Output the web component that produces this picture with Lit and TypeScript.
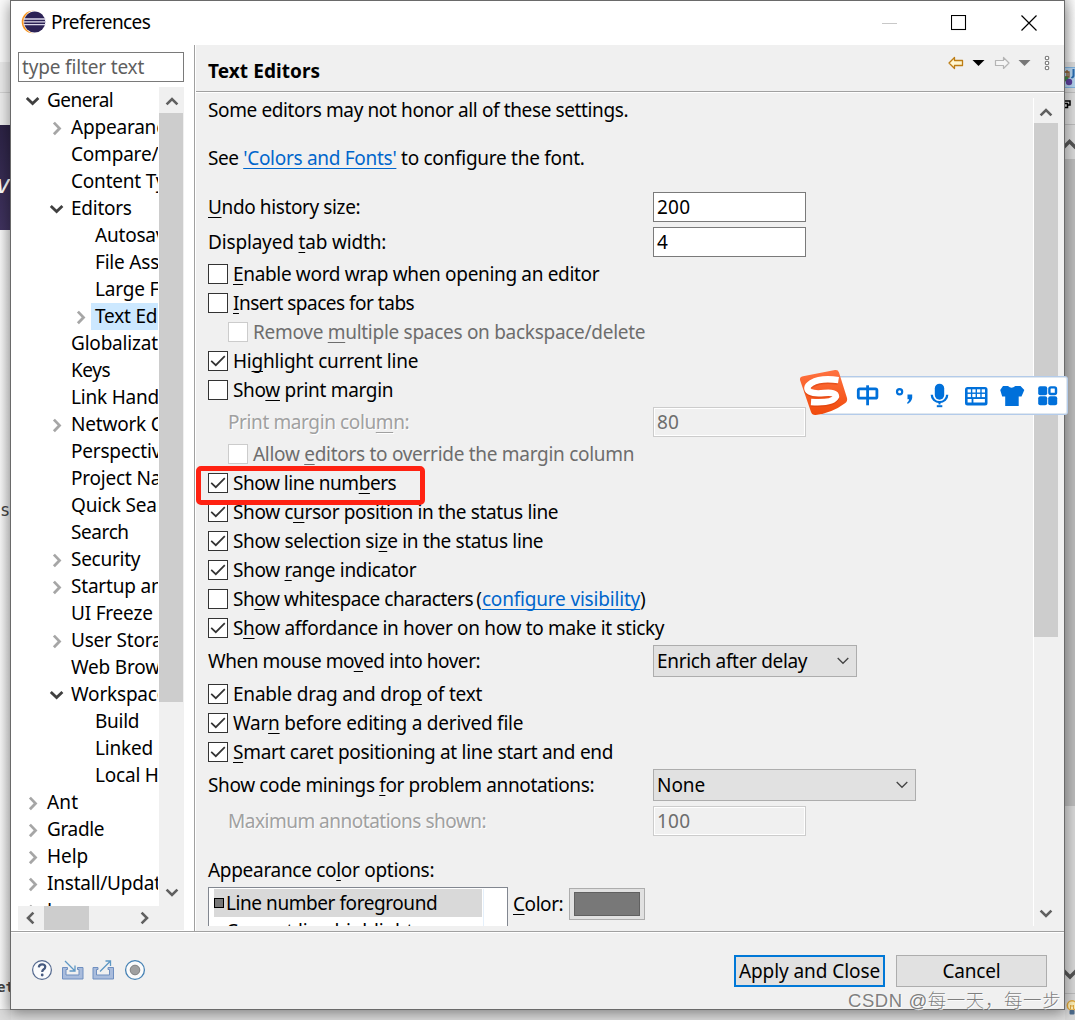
import { LitElement, html, svg, css, nothing } from "lit";
import { customElement, property } from "lit/decorators.js";
import { classMap } from "lit/directives/class-map.js";

/** Text with an "&" mnemonic marker; spreads its letters so that it fills `fit` pixels. */
@customElement("fit-label")
class FitLabel extends LitElement {
  @property() text = "";
  @property({ type: Number }) fit = 0;
  @property({ type: Boolean }) link = false;

  static styles = css`
    :host { display: inline-block; white-space: pre; }
    .key, .link { text-decoration: underline 1px; text-underline-offset: 3px; text-decoration-skip-ink: none; }
    .link { color: #0066cc; }
  `;

  updated() {
    const span = this.renderRoot.querySelector(".text") as HTMLElement;
    if (!this.fit || !span) return;
    span.style.letterSpacing = "0px";
    const natural = span.getBoundingClientRect().width;
    const count = this.text.replace("&", "").length;
    span.style.letterSpacing = `${(this.fit + 0.2 - natural) / count}px`;
  }

  render() {
    const at = this.text.indexOf("&");
    if (at < 0) return html`<span class=${this.link ? "text link" : "text"}>${this.text}</span>`;
    return html`<span class="text">${this.text.slice(0, at)}<span class="key">${this.text[at + 1]}</span>${this.text.slice(at + 2)}</span>`;
  }
}

const label = (text: string, fit = 0, link = false) => html`<fit-label text=${text} fit=${fit} ?link=${link}></fit-label>`;

type Node = { t: string; d: number; s?: "open" | "closed"; sel?: boolean; w?: number };
const TREE: Node[] = [
  { t: "General", d: 0, s: "open", w: 66 },
  { t: "Appearance", d: 1, s: "closed" },
  { t: "Compare/Patch", d: 1 },
  { t: "Content Types", d: 1 },
  { t: "Editors", d: 1, s: "open", w: 60.500 },
  { t: "Autosave", d: 2 },
  { t: "File Associations", d: 2 },
  { t: "Large File Associations", d: 2 },
  { t: "Text Editors", d: 2, s: "closed", sel: true },
  { t: "Globalization", d: 1 },
  { t: "Keys", d: 1, w: 39 },
  { t: "Link Handlers", d: 1 },
  { t: "Network Connections", d: 1, s: "closed" },
  { t: "Perspectives", d: 1 },
  { t: "Project Natures", d: 1 },
  { t: "Quick Search", d: 1 },
  { t: "Search", d: 1, w: 57.500 },
  { t: "Security", d: 1, s: "closed", w: 69 },
  { t: "Startup and Shutdown", d: 1, s: "closed" },
  { t: "UI Freeze Monitoring", d: 1 },
  { t: "User Storage Service", d: 1, s: "closed" },
  { t: "Web Browser", d: 1 },
  { t: "Workspace", d: 1, s: "open" },
  { t: "Build", d: 2, w: 44 },
  { t: "Linked Resources", d: 2 },
  { t: "Local History", d: 2 },
  { t: "Ant", d: 0, s: "closed", w: 31 },
  { t: "Gradle", d: 0, s: "closed", w: 57 },
  { t: "Help", d: 0, s: "closed", w: 41 },
  { t: "Install/Update", d: 0, s: "closed" },
  { t: "Java", d: 0, s: "closed" },
];

const chevron = (dir: string, color = "#606060", w = 2.6) => {
  const d: Record<string, string> = {
    up: "M2.6 10.4 8 5l5.4 5.4",
    down: "M2.6 5.6 8 11l5.4-5.4",
    left: "M10.4 2.6 5 8l5.4 5.4",
    right: "M5.6 2.6 11 8l-5.4 5.4",
  };
  return html`<svg width="16" height="16" viewBox="0 0 16 16" fill="none" stroke=${color} stroke-width=${w}><path d=${d[dir]} /></svg>`;
};

const twisty = (s?: string) =>
  s === "open"
    ? html`<svg width="16" height="16" viewBox="0 0 16 16" fill="none" stroke="#404040" stroke-width="2.8"><path d="M1.800 5 7.600 10.6 13.400 5" /></svg>`
    : s === "closed"
      ? html`<svg width="16" height="16" viewBox="0 0 16 16" fill="none" stroke="#a6a6a6" stroke-width="2.800"><path d="M4.900 2.600 10.500 8.400 4.900 14.200" /></svg>`
      : nothing;

const check = (text: string, fit: number, on = false, disabled = false, extra: unknown = nothing) => html`
  <div class=${classMap({ check: true, disabled })}>
    <span class="box">${on ? html`<svg width="18" height="18" viewBox="0 0 18 18" fill="none" stroke="#333" stroke-width="1.7"><path d="M2.2 8.8 6.8 13.2 15.8 4.2" /></svg>` : nothing}</span>
    ${label(text, fit)}${extra}
  </div>`;

const combo = (cls: string, text: string, fit: number) => html`
  <div class="combo ${cls}">${label(text, fit)}
    <svg width="12" height="8" viewBox="0 0 12 8" fill="none" stroke="#444" stroke-width="1.3"><path d="M.7 1 6 6.3 11.3 1" /></svg>
  </div>`;

@customElement("app-root")
class AppRoot extends LitElement {
  static styles = css`
    :host { display: block; font: 19px/27px "Noto Sans", "Noto Sans CJK SC", sans-serif; color: #000; }
    * { box-sizing: border-box; }
    svg { display: block; flex: none; }
    .desktop { position: relative; width: 1075px; height: 1020px; overflow: hidden; background: #e0e0e0;
      display: flex; justify-content: space-between; }

    .behind { display: flex; flex-direction: column; overflow: hidden; }
    .behind.left { width: 11px; background: #f6f6f6; }
    .behind.right { width: 10px; background: #d9d9d9; }
    .l1 { height: 62px; background: #fbfbfb; }
    .l2 { height: 31px; background: #ececec; border-bottom: 1px solid #d4d4d4; }
    .l3 { height: 32px; background: #efefef; }
    .l4 { height: 105px; background: linear-gradient(#2c2345, #40335f); color: #fff; font-size: 26px; font-style: italic; line-height: 117px; text-indent: -3px; }
    .l5 { height: 780px; background: linear-gradient(90deg, #f9f9f9, #e6e6e6); padding-top: 267px; border-bottom: 1px solid #c4c4c4; color: #444; font: 17px/27px "DejaVu Sans Mono", monospace; text-indent: 0; display: flex; flex-direction: column; justify-content: space-between; }
    .l5 .frag { text-indent: -3px; height: 30px; font-weight: bold; font-size: 14px; line-height: 15px; white-space: nowrap; padding-top: 1px; }
    .l6 { flex: 1; background: #dcdcdc; }
    .r1 { height: 62px; background: linear-gradient(90deg, #e4e4e4, #fafafa); }
    .r2 { height: 31px; background: #dadada; padding-top: 5px; border-bottom: 1px solid #c0c0c0; }
    .r3 { height: 32px; background: #dedede; padding-top: 7px; border-bottom: 1px solid #bdbdbd; }
    .r4 { height: 34px; background: #dadada; padding-top: 11px; }
    .r5 { height: 647px; background: #bdbdbd; }
    .r6 { height: 188px; padding-top: 160px; border-bottom: 1px solid #bdbdbd; }
    .r7 { height: 26px; padding: 5px 0 0 1px; }

    .window { position: absolute; left: 10px; top: 0; width: 1055px; height: 1010px; background: #fff;
      border: 1px solid #6a6a6a; box-shadow: 0 3px 14px rgba(0, 0, 0, .45); display: flex; flex-direction: column; }
    .title { height: 44px; display: flex; align-items: center; padding: 0 27px 2px 10px; }
    .title fit-label { margin-left: 5px; flex: 1; }
    .title .ctl { display: flex; gap: 54px; align-items: center; padding-top: 1px; }
    .body { height: 886px; display: flex; }
    .side { width: 184px; padding: 7px 10px 0 7px; border-right: 1px solid #a0a0a0; display: flex; flex-direction: column; }
    .filter { height: 30px; width: 166px; border: 1px solid #7a7a7a; padding-left: 3px; color: #5f5f5f; line-height: 28px; margin-bottom: 5px; }
    .treewrap { width: 166px; height: 819px; display: flex; }
    .tree { width: 140px; margin-right: 1px; overflow: hidden; }
    .node { height: 27px; display: flex; align-items: center; }
    .node .tw { width: 24px; height: 27px; padding: 6px 4px 0 7px; flex: none; display: block; }
    .node .nm { padding: 0 6px 0 5px; height: 27px; white-space: nowrap; letter-spacing: -.2px; }
    .node.sel .nm { background: #cce8ff; padding-left: 4px; margin-left: 1px; flex: 1; }
    .d1 { padding-left: 24px; }
    .d2 { padding-left: 48px; }
    .vbar { width: 25px; background: #f0f0f0; display: flex; flex-direction: column; align-items: flex-start; }
    .vbar .thumb { width: 24px; height: 589px; background: #cdcdcd; margin-top: 4px; }
    .vbar > svg { margin: 7px 0 -1px 4.500px; }
    .vbar .end { margin: auto 0 6px 4.500px; }
    .hbar { width: 166px; height: 24px; background: #f0f0f0; display: flex; align-items: center; padding-left: 5px; }
    .hbar .thumb { width: 45px; height: 24px; background: #cdcdcd; margin: 0 47px 0 5px; }

    .main { flex: 1; background: #f0f0f0; border-left: 1px solid #fff; display: flex; flex-direction: column; }
    .head { height: 47px; border-bottom: 1px solid #a0a0a0; display: flex; justify-content: space-between; padding: 12px 14px 0 12px; font-weight: 700; }
    .head > fit-label { margin-top: 1px; }
    .tools { display: flex; height: 12px; align-items: center; }
    .scroll { border-top: 1px solid #fff; height: 834px; display: flex; overflow: hidden; }
    .form { width: 837px; flex: none; padding: 4px 0 0 12px; }
    .bar { height: 829px; margin-top: 5px; width: 26px; flex: none; border-left: 1px solid #fff; display: flex; flex-direction: column; align-items: flex-start; }
    .bar .thumb { width: 24px; height: 514px; background: #cdcdcd; margin-top: 3px; }
    .bar > svg { margin: 7px 0 -1px 4px; }
    .bar .end { margin: auto 0 6px 4px; }
    .line { height: 27px; white-space: nowrap; }
    .see { margin: 21px 0 20px; }
    .field { display: grid; grid-template-columns: 445px auto; align-items: center; justify-content: start; }
    .field + .field { margin-top: 5px; }
    .input { width: 153px; height: 30px; border: 1px solid #7a7a7a; background: #fff; padding-left: 3px; line-height: 28px; }
    .dim .input { border-color: #ccc; background: #f0f0f0; box-shadow: inset 0 0 0 1px #fff; color: #6d6d6d; }
    .dim fit-label { padding-left: 20px; color: #a0a0a0; text-shadow: 1px 1px 0 #fff; }
    .dim .input fit-label { padding: 0; color: #6d6d6d; text-shadow: none; }
    .checks { margin: 3px 0 2px; }
    .check { height: 29px; display: flex; line-height: 28px; }
    .box { width: 20px; height: 20px; border: 1px solid #333; background: #fff; margin: 4px 5px 0 0; }
    .disabled { color: #6d6d6d; padding-left: 20px; }
    .disabled .box { border-color: #ccc; }
    .paren { margin-left: 3px; }
    .combo { height: 32px; border: 1px solid #adadad; background: #e1e1e1; display: flex; align-items: center; justify-content: space-between; padding: 0 7px 0 3px; }
    .combo.a { width: 204px; }
    .combo.b { width: 263px; }
    .cap { margin: 21px 0 3px; }
    .colors { display: flex; }
    .list { width: 300px; height: 90px; border: 1px solid #828790; background: #fff; padding: 1px 0 0 5px; }
    .item { width: 268px; height: 28px; display: flex; align-items: center; gap: 2px; }
    .item.on { background: #d9d9d9; }
    .sw { width: 10px; height: 10px; border: 1px solid #000; background: #787878; }
    .item:not(.on) .sw { visibility: hidden; }
    .inner { width: 270px; border-right: 1px solid #e5f0fb; height: 80px; }
    .clabel { width: 61px; padding: 4px 0 0 5px; }
    .swatch { width: 76px; height: 32px; border: 1px solid #adadad; background: #e1e1e1; padding: 3px 4px; margin-top: 1px; }
    .swatch div { height: 24px; background: #787878; border: 1px solid #606060; }

    .foot { flex: 1; background: #f0f0f0; border-top: 1px solid #a0a0a0; box-shadow: inset 0 1px 0 #fff; display: flex; justify-content: space-between; padding: 23px 17px 0 20px; }
    .icons { display: flex; gap: 7.700px; padding-top: 4px; }
    .btns { display: flex; gap: 11px; }
    .btn { width: 151px; height: 32px; background: #e1e1e1; border: 1px solid #adadad; display: flex; align-items: center; justify-content: center; }
    .btn.def { border: 2px solid #0078d7; }

    .mark { position: absolute; left: 196px; top: 466px; width: 229px; height: 39px; border: 5px solid #ff2212; border-radius: 5px; }
    .ime { position: absolute; left: 820px; top: 376px; width: 248px; height: 39px; background: #fff; border: 1px solid #b3cbea; border-radius: 3px; box-shadow: inset 0 0 0 1px #dfe7ef; }
    .ime svg { position: absolute; left: -22px; top: -8px; }
    .wm { position: absolute; left: 848px; top: 987px; color: rgba(95, 95, 95, .8); text-shadow: 1px 1px 0 rgba(255, 255, 255, .8); font-size: 18.5px; white-space: nowrap; font-family: "Liberation Sans", "Noto Sans CJK SC", sans-serif; font-weight: 300; }
  `;

  private tree() {
    return TREE.map(n => html`
      <div class=${classMap({ node: true, sel: !!n.sel, [`d${n.d}`]: true })}>
        <span class="tw">${twisty(n.s)}</span><span class="nm">${label(n.t, n.w ?? 0)}</span>
      </div>`);
  }

  private ime() {
    const keys = [0, 1, 2, 3].flatMap(c => [0, 1].map(r => svg`<rect x=${168.600 + c * 4.7} y=${20.3 + r * 4.6} width="3.3" height="3.2" />`));
    return html`<svg width="270" height="52" viewBox="0 0 270 52">
      <defs><linearGradient id="sg" x1="0" y1="0" x2="0" y2="1"><stop offset="0" stop-color="#ff7240" /><stop offset="1" stop-color="#f04a0c" /></linearGradient></defs>
      <path d="M4 7.2 36 1q3-.5 4 2.4L48 29q.8 3.4-2 5.2Q33 44 16.500 46q-3.500.2-4.500-3L1 11q-.6-3 3-3.800Z" fill="url(#sg)" />
      <path d="M39 12.500Q22 10 12.500 15.500Q5 20.500 11 24.300Q15 26.500 25 25.500Q37 24 37 29Q34 36 12 34.500" fill="none" stroke="#d63c08" stroke-width="6.400" opacity=".5" />
      <path d="M39.500 11.200Q22 8.500 12.500 14Q5 19 11 22.800Q15 25 25 24Q37 22.800 37 27.500Q34 34.500 12 33" fill="none" stroke="#fff" stroke-width="6.4" />
      <g fill="none" stroke="#0070da" stroke-width="2.800">
        <rect x="59.300" y="19.800" width="18.600" height="9.400" rx="1.500" /><path d="M68.600 16.300v20" />
        <circle cx="100.600" cy="22.800" r="2.600" stroke-width="2.200" />
        <path d="M132.800 25.800a7.700 7.400 0 0 0 15.400 0" stroke-width="2.300" /><path d="M137.800 37.200h5.500" stroke-width="2" />
        <path d="M140.500 33v2.500" stroke-width="2" />
      </g>
      <g fill="#0070da">
        <path d="M108.500 25.500h4.700q.8 7-4.500 9.500l-.6-1.300q2-1.500 2-3.400h-1.600z" />
        <rect x="135.800" y="14.700" width="9.400" height="16" rx="4.700" />
        <rect x="166" y="18" width="22.500" height="18.500" rx="2.500" />
        <path d="M204 17h5q3.500 3.500 7.300 0h5.200l3.800 4-2.800 6.500h-2.800v9.500h-13.500v-9.500h-3l-2-6.500z" />
        <rect x="239.200" y="17.200" width="9" height="9" rx="2" /><rect x="239.200" y="27.300" width="9" height="9" rx="2" /><rect x="249.200" y="27.300" width="9" height="9" rx="2" />
      </g>
      <rect x="250.400" y="18.400" width="6.600" height="6.600" rx="1.500" fill="none" stroke="#0070da" stroke-width="2.400" />
      <g fill="#fff">${keys}<rect x="168.600" y="30" width="4" height="3.500" /><rect x="174.400" y="30" width="11.500" height="3.500" /></g>
    </svg>`;
  }

  render() {
    return html`<div class="desktop">
      <div class="behind left"><div class="l1"></div><div class="l2"></div><div class="l3"></div><div class="l4">v</div>
        <div class="l5"><span>s</span><span class="frag">et</span></div><div class="l6"></div></div>
      <div class="behind right">
        <div class="r1"></div>
        <div class="r2"><svg width="10" height="21"><rect width="10" height="21" fill="#7fb3e0" /><rect y="1" width="10" height="19" fill="#b4d3ee" /><path d="M0 5h4v5H0M2 3v9" stroke="#8a5a2c" stroke-width="1.300" fill="none" /><path d="M8.500 2v7q-1 2-2 1" stroke="#2b6cb0" stroke-width="2" fill="none" /><circle cx="1" cy="12" r="2.500" fill="#3c8a4a" /><circle cx="4" cy="15" r="3.200" fill="#5a3e9b" /></svg></div>
        <div class="r3"><svg width="10" height="9" fill="none" stroke="#000"><path d="M-1 3.500h3.500v4H-1M0 1h5v4H2.500" stroke-width="1.500" /></svg></div>
        <div class="r4"><svg width="10" height="16" fill="none" stroke="#555" stroke-width="3.500"><path d="M-2 12 4.500 5.500 11 12" /></svg></div>
        <div class="r5"></div>
        <div class="r6"><svg width="10" height="16" fill="none" stroke="#555" stroke-width="3.500"><path d="M-2 4 5 11 12 4" /></svg></div>
        <div class="r7"><svg width="10" height="18"><circle cx="6" cy="6.500" r="4.700" fill="#fff0b8" stroke="#e3a93c" stroke-width="1.500" /><path d="M4.500 10V6l1.500 1.500L7.500 6v4" stroke="#e3a93c" fill="none" /><rect x="3.500" y="11" width="5" height="4.500" rx="1" fill="#4d6b8c" /></svg></div>
      </div>

      <div class="window">
        <div class="title">
          <svg width="25" height="24" viewBox="0 0 25 24"><circle cx="12" cy="12" r="11.300" fill="#f7941e" /><circle cx="14" cy="12" r="11.400" fill="#fff" /><circle cx="13.700" cy="12" r="10.600" fill="#2c2255" /><path d="M2.500 9h22M2.500 11.800h22M2.500 14.600h22" stroke="#dcd9ea" stroke-width="1.300" /></svg>
          ${label("Preferences", 99)}
          <div class="ctl">
            <svg width="15" height="16"><path d="M0 8.500h15" stroke="#c8c8c8" /></svg>
            <svg width="16" height="16" fill="none" stroke="#000" stroke-width="1.100"><rect x=".5" y=".5" width="14" height="14" /></svg>
            <svg width="16" height="16" stroke="#000" stroke-width="1.200"><path d="M.5.5l15 15M15.500.5l-15 15" /></svg>
          </div>
        </div>
        <div class="body">
          <div class="side">
            <div class="filter">${label("type filter text", 122)}</div>
            <div class="treewrap">
              <div class="tree">${this.tree()}</div>
              <div class="vbar">${chevron("up")}<div class="thumb"></div><div class="end">${chevron("down")}</div></div>
            </div>
            <div class="hbar">${chevron("left")}<div class="thumb"></div>${chevron("right")}</div>
          </div>
          <div class="main">
            <div class="head">${label("Text Editors", 112)}
              <div class="tools">
                <svg width="16" height="14" viewBox="0 0 16 14"><path d="M1 7 6.500 1.500V4.500H14.500V9.500H6.500V12.500Z" fill="#fff6cf" stroke="#bd7d14" stroke-width="1.300" stroke-linejoin="round" /></svg>
                <svg width="30" height="14" viewBox="0 0 30 14"><path d="M8.500 4h12L14.500 10Z" fill="#000" /></svg>
                <svg width="16" height="14" viewBox="0 0 16 14"><path d="M15 7 9.500 1.500V4.500H1.500V9.500H9.500V12.500Z" fill="#f5f5f5" stroke="#b4b4b4" stroke-width="1.200" stroke-linejoin="round" /></svg>
                <svg width="30" height="14" viewBox="0 0 30 14"><path d="M8.500 4h12L14.500 10Z" fill="#777" /></svg>
                <svg width="10" height="16" viewBox="0 0 10 16" fill="#fff" stroke="#777" stroke-width="1.100"><circle cx="7" cy="3" r="1.800" /><circle cx="7" cy="8" r="1.800" /><circle cx="7" cy="13" r="1.800" /></svg>
              </div>
            </div>
            <div class="scroll">
              <div class="form">
                <div class="line">${label("Some editors may not honor all of these settings.", 420)}</div>
                <div class="line see">${label("See ", 35)}${label("'Colors and Fonts'", 153, true)}${label(" to configure the font.", 188)}</div>
                <div class="field">${label("&Undo history size:", 152)}<div class="input">${label("200", 33)}</div></div>
                <div class="field">${label("Displayed &tab width:", 178)}<div class="input">${label("4", 11)}</div></div>
                <div class="checks">
                  ${check("&Enable word wrap when opening an editor", 366)}
                  ${check("&Insert spaces for tabs", 181)}
                  ${check("Remove &multiple spaces on backspace/delete", 392, false, true)}
                  ${check("Hi&ghlight current line", 185, true)}
                  ${check("Sho&w print margin", 160)}
                </div>
                <div class="field dim">${label("Print margin colu&mn:", 181)}<div class="input">${label("80", 22)}</div></div>
                <div class="checks">
                  ${check("Allow &editors to override the margin column", 381, false, true)}
                  ${check("Show line num&bers", 163, true)}
                  ${check("Show c&ursor position in the status line", 325, true)}
                  ${check("Show selection si&ze in the status line", 310, true)}
                  ${check("Show &range indicator", 183, true)}
                  ${check("Sh&ow whitespace characters", 240, false, false, html`<span class="paren">${label("(", 5.500)}${label("configure visibility", 158, true)}${label(")", 6)}</span>`)}
                  ${check("S&how affordance in hover on how to make it sticky", 431, true)}
                </div>
                <div class="field">${label("When mouse mo&ved into hover:", 272)}${combo("a", "Enrich after delay", 150)}</div>
                <div class="checks">
                  ${check("Enable drag and dro&p of text", 249, true)}
                  ${check("War&n before editing a derived file", 290, true)}
                  ${check("&Smart caret positioning at line start and end", 380, true)}
                </div>
                <div class="field">${label("Show code minings &for problem annotations:", 386)}${combo("b", "None", 48)}</div>
                <div class="field dim">${label("Maximum annotations shown:", 258)}<div class="input">${label("100", 33)}</div></div>
                <div class="line cap">${label("Appearance co&lor options:", 226)}</div>
                <div class="colors">
                  <div class="list"><div class="inner">
                    <div class="item on"><span class="sw"></span>${label("Line number foreground", 211)}</div>
                    <div class="item"><span class="sw"></span>${label("Current line highlight", 187)}</div>
                  </div></div>
                  <div class="clabel">${label("&Color:", 50)}</div>
                  <div class="swatch"><div></div></div>
                </div>
              </div>
              <div class="bar">${chevron("up")}<div class="thumb"></div><div class="end">${chevron("down")}</div></div>
            </div>
          </div>
        </div>
        <div class="foot">
          <div class="icons">
            <svg width="22" height="22" viewBox="0 0 22 22" fill="none"><circle cx="11" cy="11" r="9.400" fill="#fafbfd" stroke="#54698f" stroke-width="1.200" /><path d="M7.800 8.300q.3-3 3.300-3t3.200 2.500q0 1.600-1.800 2.700-1.300.9-1.300 2.500" stroke="#45597f" stroke-width="2.200" /><circle cx="11.200" cy="16" r="1.400" fill="#45597f" /></svg>
            <svg width="24" height="22" viewBox="0 0 24 22" fill="none"><path d="M1.500 8.500h5v2H5v5.500h13v-5.500H16.500v-2h5.500V20H1.500Z" fill="#a9bcdc" stroke="#6f8fc0" stroke-width="1" /><path d="M4 2 13.500 11.500M14 6.500v5.500H8.500" stroke="#5e97c4" stroke-width="1.300" /></svg>
            <svg width="24" height="22" viewBox="0 0 24 22" fill="none"><path d="M1 8.500h5v2H4.500v5.500h13v-5.500H16v-2h5.500V20H1Z" fill="#a9bcdc" stroke="#6f8fc0" stroke-width="1" /><path d="M8 12.500 18 2.500M13.500 2h5v5" stroke="#5e97c4" stroke-width="1.300" /></svg>
            <svg width="22" height="22" viewBox="0 0 22 22"><circle cx="11" cy="11" r="9.400" fill="#fbfbfb" stroke="#4682b4" stroke-width="1.300" /><circle cx="11" cy="11" r="4.800" fill="#a0a0a0" stroke="#808080" /></svg>
          </div>
          <div class="btns">
            <div class="btn def">${label("Apply and Close", 141)}</div>
            <div class="btn">${label("Cancel", 58)}</div>
          </div>
        </div>
      </div>
      <div class="mark"></div>
      <div class="ime">${this.ime()}</div>
      <div class="wm">${label("CSDN @每一天，每一步", 213)}</div>
    </div>`;
  }
}
